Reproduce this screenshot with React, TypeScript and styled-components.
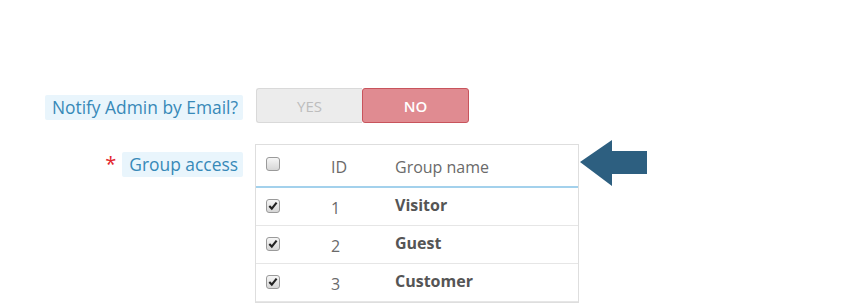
import React from "react";
import styled, { createGlobalStyle } from "styled-components";

const Global = createGlobalStyle`
  html, body { margin: 0; padding: 0; background: #fff; }
  body { font-family: "Open Sans", "Liberation Sans", sans-serif; }
`;

const Page = styled.div`
  width: 857px;
  height: 304px;
  overflow: hidden;
  padding-top: 88px;
  box-sizing: border-box;
`;

const FormRow = styled.div<{ $mt?: number }>`
  display: flex;
  align-items: flex-start;
  gap: 13px;
  margin-top: ${(p) => p.$mt ?? 0}px;
`;

const LabelCell = styled.div<{ $pt: number }>`
  width: 243px;
  flex: none;
  display: flex;
  justify-content: flex-end;
  align-items: center;
  padding-top: ${(p) => p.$pt}px;
`;

const Required = styled.span`
  color: #e3262c;
  font-size: 20px;
  margin-right: 6px;
  line-height: 1;
  position: relative;
  top: -1px;
`;

const Label = styled.span`
  background: #e9f5fc;
  color: #3789b8;
  font-size: 17.4px;
  line-height: 25px;
  padding: 0 5px 0 7px;
  border-radius: 2px;
`;

const Toggle = styled.div`
  display: flex;
  width: 213px;
  height: 35px;
`;

const ToggleOpt = styled.div<{ $active?: boolean }>`
  flex: 1;
  display: flex;
  align-items: center;
  justify-content: center;
  box-sizing: border-box;
  font-size: 15px;
  border-radius: 3px;
  ${(p) =>
    p.$active
      ? `background: #e08b91; border: 1px solid #c8545c; color: #fff; font-weight: 600;`
      : `background: #ececec; border: 1px solid #d9d9d9; color: #bdbdbd; border-right: none; border-radius: 3px 0 0 3px;`}
`;

const Table = styled.div`
  width: 324px;
  flex: none;
  border: 1px solid #dedede;
  box-sizing: border-box;
  margin-left: -1px;
`;

const HeadRow = styled.div`
  display: grid;
  grid-template-columns: 64px 64px 1fr;
  height: 43px;
  border-bottom: 2px solid #a3d1ec;
  box-sizing: border-box;
  color: #666;
  font-size: 16px;
`;

const BodyRow = styled.div`
  display: grid;
  grid-template-columns: 64px 64px 1fr;
  height: 38px;
  border-bottom: 1px solid #e6e6e6;
  box-sizing: border-box;
  font-size: 16px;
`;

const Cell = styled.div<{ $pt: number; $bold?: boolean }>`
  padding-top: ${(p) => p.$pt}px;
  padding-left: 11px;
  color: ${(p) => (p.$bold ? "#555" : "#6a6a6a")};
  font-weight: ${(p) => (p.$bold ? 700 : 400)};
  line-height: 20px;
`;

const Box = styled.span`
  display: inline-block;
  width: 14px;
  height: 14px;
  border: 1px solid #9a9a9a;
  border-radius: 3px;
  background: linear-gradient(#f6f6f6, #d6d6d6);
  position: relative;
  box-sizing: border-box;
`;

const CheckCell = styled.div<{ $pt: number }>`
  padding-top: ${(p) => p.$pt}px;
  padding-left: 10px;
`;

const ArrowWrap = styled.div`
  margin-top: -4px;
  margin-left: -12px;
`;

const Check = () => (
  <svg width="12" height="12" viewBox="0 0 12 12" style={{ position: "absolute", left: 0, top: 0 }}>
    <path d="M2.3 6 L4.8 8.6 L9.6 2.6" fill="none" stroke="#222" strokeWidth="2.1" />
  </svg>
);

const rows = [
  { id: 1, name: "Visitor" },
  { id: 2, name: "Guest" },
  { id: 3, name: "Customer" },
];

export default function App() {
  return (
    <Page>
      <Global />
      <FormRow>
        <LabelCell $pt={7}>
          <Label>Notify Admin by Email?</Label>
        </LabelCell>
        <Toggle>
          <ToggleOpt>YES</ToggleOpt>
          <ToggleOpt $active>NO</ToggleOpt>
        </Toggle>
      </FormRow>
      <FormRow $mt={21}>
        <LabelCell $pt={8}>
          <Required>*</Required>
          <Label>Group access</Label>
        </LabelCell>
        <Table>
          <HeadRow>
            <CheckCell $pt={9}>
              <Box />
            </CheckCell>
            <Cell $pt={12}>ID</Cell>
            <Cell $pt={12}>Group name</Cell>
          </HeadRow>
          {rows.map((r) => (
            <BodyRow key={r.id}>
              <CheckCell $pt={8}>
                <Box>
                  <Check />
                </Box>
              </CheckCell>
              <Cell $pt={10}>{r.id}</Cell>
              <Cell $pt={7} $bold>
                {r.name}
              </Cell>
            </BodyRow>
          ))}
        </Table>
        <ArrowWrap>
          <svg width="68" height="48" viewBox="0 0 68 48">
            <polygon points="0,22 32,0 32,11 67,11 67,34 32,34 32,46" fill="#2d5f80" />
          </svg>
        </ArrowWrap>
      </FormRow>
    </Page>
  );
}
